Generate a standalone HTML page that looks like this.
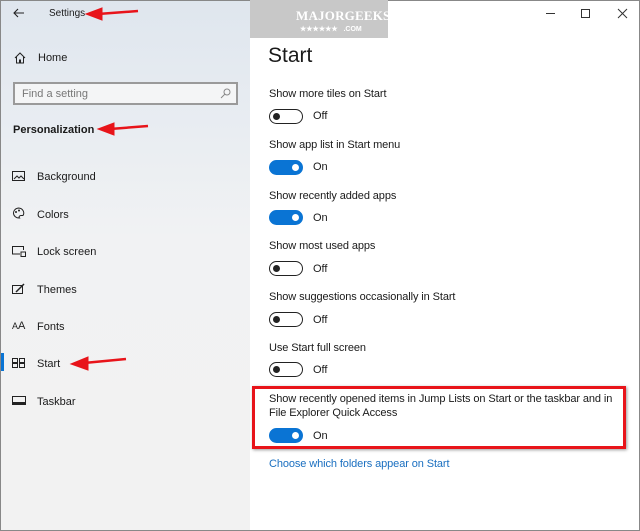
<!DOCTYPE html>
<html><head><style>
*{margin:0;padding:0;box-sizing:border-box}
body{width:640px;height:531px;overflow:hidden;font-family:"Liberation Sans",sans-serif;position:relative;background:#fff}
.left{position:absolute;left:0;top:0;width:250px;height:531px;background:linear-gradient(180deg,#dfe6ee 0%,#e9edf2 25%,#f1f2f3 45%,#f2f2f2 100%);border-left:1px solid #888}
.t{position:absolute;font-size:11px;color:#1a1a1a;white-space:nowrap}
.r{letter-spacing:-0.1px}
.nav{position:absolute;left:37px;font-size:11px;color:#1a1a1a}
.ic{position:absolute;left:12px}
.tg{position:absolute;left:269px;width:34px;height:15px;border-radius:8px}
.off{border:1.5px solid #222;background:#fff}
.off::after{content:"";position:absolute;left:3px;top:2.5px;width:7px;height:7px;border-radius:50%;background:#222}
.on{background:#0a74d4}
.on::after{content:"";position:absolute;right:4px;top:4px;width:7px;height:7px;border-radius:50%;background:#fff}
.st{position:absolute;left:313px;font-size:11px;color:#1a1a1a}
</style></head><body>
<div class="left"></div>
<div style="position:absolute;right:0;top:0;width:1px;height:531px;background:#888"></div>
<div style="position:absolute;left:0;top:0;width:640px;height:1px;background:#888"></div>
<div style="position:absolute;left:0;bottom:0;width:640px;height:1px;background:#888"></div>
<svg style="position:absolute;left:13px;top:8px" width="12" height="10"><path d="M11 5H1M5 1L1 5l4 4" stroke="#222" stroke-width="1.1" fill="none"/></svg>
<div class="t" style="left:49px;top:8px;font-size:10px">Settings</div>
<div style="position:absolute;left:250px;top:0;width:138px;height:38px;background:#c8c8c8"></div>
<div style="position:absolute;left:296px;top:8px;font-family:'Liberation Serif',serif;font-weight:bold;font-size:13px;color:#fff;letter-spacing:.2px">MAJORGEEKS</div>
<div style="position:absolute;left:300px;top:25px;font-size:7px;color:#fff;font-weight:bold">★★★★★★ &nbsp;&nbsp;.COM</div>
<div style="position:absolute;left:546px;top:13px;width:9px;height:1px;background:#333"></div>
<div style="position:absolute;left:581px;top:9px;width:9px;height:9px;border:1px solid #333"></div>
<svg style="position:absolute;left:617px;top:8px" width="11" height="11"><path d="M1 1l9 9M10 1l-9 9" stroke="#333" stroke-width="1"/></svg>
<svg style="position:absolute;left:14px;top:52px" width="12" height="12"><path d="M1 6L6 1l5 5M2.5 5v6h3V8h1v3h3V5" stroke="#222" fill="none" stroke-width="1"/></svg>
<div class="t" style="left:38px;top:52px;font-size:11px">Home</div>
<div style="position:absolute;left:13px;top:82px;width:225px;height:23px;border:2px solid #9a9a9a;background:#f4f5f6"></div>
<div class="t" style="left:22px;top:88px;color:#777">Find a setting</div>
<svg style="position:absolute;left:220px;top:88px" width="11" height="11"><circle cx="7" cy="4" r="3" stroke="#888" fill="none"/><path d="M5 6L1 10" stroke="#888"/></svg>
<div class="t" style="left:13px;top:124px;font-weight:bold">Personalization</div>
<svg class="ic" style="top:171px" width="13" height="11"><rect x=".5" y=".5" width="12" height="9" stroke="#222" fill="none"/><path d="M2 8l3-3 2 2 2-2 3 3" stroke="#222" fill="none"/></svg>
<div class="nav" style="top:171px">Background</div>
<svg class="ic" style="top:207px" width="13" height="12"><path d="M6.5 1a5.5 5 0 1 0 1 10c-1-1 0-2.5 1.5-2.5h2A5.5 5 0 0 0 6.5 1z" stroke="#222" fill="none"/><circle cx="4" cy="5" r="1" fill="#222"/><circle cx="7" cy="3.5" r="1" fill="#222"/></svg>
<div class="nav" style="top:209px">Colors</div>
<svg class="ic" style="top:246px" width="14" height="11"><path d="M8 8H.5V.5h11V4" stroke="#222" fill="none"/><rect x="9" y="6" width="4.5" height="4.5" stroke="#222" fill="none"/></svg>
<div class="nav" style="top:246px">Lock screen</div>
<svg class="ic" style="top:283px" width="14" height="12"><rect x=".5" y="2.5" width="10" height="8" stroke="#222" fill="none"/><path d="M4 9l8-8" stroke="#222" stroke-width="1.5"/></svg>
<div class="nav" style="top:284px">Themes</div>
<div style="position:absolute;left:12px;top:320px;font-size:9px;color:#222">A<span style="font-size:11px">A</span></div>
<div class="nav" style="top:321px">Fonts</div>
<div style="position:absolute;left:1px;top:353px;width:3px;height:18px;background:#0a74d4"></div>
<svg class="ic" style="top:358px" width="13" height="10"><rect x=".5" y=".5" width="5" height="4" stroke="#222" fill="none"/><rect x="7.5" y=".5" width="5" height="4" stroke="#222" fill="none"/><rect x=".5" y="5.5" width="5" height="4" stroke="#222" fill="none"/><rect x="7.5" y="5.5" width="5" height="4" stroke="#222" fill="none"/></svg>
<div class="nav" style="top:358px">Start</div>
<svg class="ic" style="top:396px" width="14" height="9"><rect x=".5" y=".5" width="13" height="8" stroke="#222" fill="none"/><rect x="1" y="6" width="12" height="2" fill="#222"/></svg>
<div class="nav" style="top:396px">Taskbar</div>
<div class="t" style="left:268px;top:44px;font-size:21px">Start</div>
<div class="t r" style="left:269px;top:88px">Show more tiles on Start</div>
<div class="tg off" style="top:109px"></div><div class="st" style="top:110px">Off</div>
<div class="t r" style="left:269px;top:139px">Show app list in Start menu</div>
<div class="tg on" style="top:160px"></div><div class="st" style="top:161px">On</div>
<div class="t r" style="left:269px;top:190px">Show recently added apps</div>
<div class="tg on" style="top:210px"></div><div class="st" style="top:212px">On</div>
<div class="t r" style="left:269px;top:240px">Show most used apps</div>
<div class="tg off" style="top:261px"></div><div class="st" style="top:263px">Off</div>
<div class="t r" style="left:269px;top:291px">Show suggestions occasionally in Start</div>
<div class="tg off" style="top:312px"></div><div class="st" style="top:314px">Off</div>
<div class="t r" style="left:269px;top:342px">Use Start full screen</div>
<div class="tg off" style="top:362px"></div><div class="st" style="top:364px">Off</div>
<div style="position:absolute;left:252px;top:386px;width:374px;height:63px;border:3px solid #e8141a;box-shadow:1px 1px 3px rgba(0,0,0,.4)"></div>
<div class="t r" style="left:269px;top:393px">Show recently opened items in Jump Lists on Start or the taskbar and in</div>
<div class="t r" style="left:269px;top:407px">File Explorer Quick Access</div>
<div class="tg on" style="top:428px"></div><div class="st" style="top:430px">On</div>
<div class="t r" style="left:269px;top:458px;color:#1a6fc0">Choose which folders appear on Start</div>
<svg style="position:absolute;left:0;top:0" width="640" height="531">
<g fill="#e8141a" stroke="#e8141a">
<path d="M98 14L138 11" stroke-width="2.5"/><path d="M86 14l16-6v12z"/>
<path d="M110 129L148 126" stroke-width="2.5"/><path d="M98 129l16-6v12z"/>
<path d="M84 363L126 359" stroke-width="2.5"/><path d="M71 364l17-7v13z"/>
</g></svg>
</body></html>
